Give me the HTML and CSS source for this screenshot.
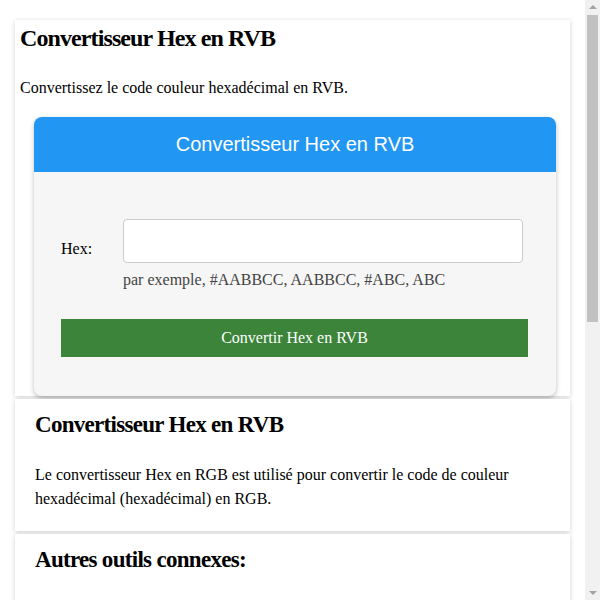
FILE: index.html
```html
<!DOCTYPE html>
<html lang="fr">
<head>
  <meta charset="utf-8">
  <meta name="viewport" content="width=device-width, initial-scale=1">
  <title>Convertisseur Hex en RVB</title>
  <link rel="stylesheet" href="styles.css">
</head>
<body>
  <div class="page">
    <!-- Outil principal -->
    <section class="card card-tool">
      <h1 class="page-title">Convertisseur Hex en RVB</h1>
      <p class="page-intro">Convertissez le code couleur hexadécimal en RVB.</p>

      <div class="converter">
        <div class="converter-header">Convertisseur Hex en RVB</div>
        <form class="converter-body" onsubmit="return false;">
          <div class="field-row">
            <label class="field-label" for="hex">Hex:</label>
            <div class="field-input">
              <input type="text" id="hex" class="hex-input">
              <div class="field-hint">par exemple, #AABBCC, AABBCC, #ABC, ABC</div>
            </div>
          </div>
          <button type="submit" class="convert-btn">Convertir Hex en RVB</button>
        </form>
      </div>
    </section>

    <!-- Description -->
    <section class="card card-text">
      <h2 class="section-title">Convertisseur Hex en RVB</h2>
      <p class="section-text">Le convertisseur Hex en RGB est utilisé pour convertir le code de couleur hexadécimal (hexadécimal) en RGB.</p>
    </section>

    <!-- Outils connexes -->
    <section class="card card-text">
      <h2 class="section-title">Autres outils connexes:</h2>
      <ul class="tool-list">
        <li>Convertisseur RVB en Hex</li>
        <li>Convertisseur Hex en HSL</li>
        <li>Convertisseur Hex en CMJN</li>
      </ul>
    </section>
  </div>

  <!-- Barre de défilement -->
  <div class="scrollbar" aria-hidden="true">
    <span class="scroll-arrow scroll-up"></span>
    <span class="scroll-thumb"></span>
    <span class="scroll-arrow scroll-down"></span>
  </div>
</body>
</html>
```

FILE: styles.css
```css
/* Reset */
* {
  box-sizing: border-box;
}

body {
  margin: 0;
  background: #fff;
  color: #000;
  font-family: "Liberation Serif", "Times New Roman", serif;
  font-size: 16px;
}

.page {
  width: 585px;
  padding: 20px 15px 20px;
  display: flex;
  flex-direction: column;
  gap: 3px;
}

/* Cartes */
.card {
  background: #fff;
  box-shadow: 0 1px 5px rgba(0, 0, 0, 0.18);
}

.card-tool {
  padding: 5px 5px 0;
}

.page-title {
  margin: 0;
  font-size: 24px;
  font-weight: bold;
  letter-spacing: -0.9px;
}

.page-intro {
  margin: 27px 0 20px;
}

/* Widget convertisseur */
.converter {
  width: 522px;
  margin-left: 14px;
  border-radius: 8px;
  overflow: hidden;
  background: #f6f6f6;
  box-shadow: 0 2px 5px rgba(0, 0, 0, 0.25);
}

.converter-header {
  height: 55px;
  display: flex;
  align-items: center;
  justify-content: center;
  background: #2196f3;
  color: #fff;
  font-family: "Liberation Sans", Arial, sans-serif;
  font-size: 20px;
}

.converter-body {
  margin: 0;
  padding: 47px 28px 39px 27px;
}

.field-row {
  display: flex;
}

.field-label {
  width: 62px;
  padding-top: 21px;
}

.field-input {
  width: 400px;
}

.hex-input {
  display: block;
  width: 400px;
  height: 44px;
  border: 1px solid #ccc;
  border-radius: 4px;
  background: #fff;
  padding: 0 10px;
  font-family: inherit;
  font-size: 16px;
}

.field-hint {
  margin-top: 8px;
  color: #444;
}

.convert-btn {
  display: block;
  width: 100%;
  height: 38px;
  margin-top: 30px;
  border: 0;
  background: #3b843a;
  color: #fff;
  font-family: "Liberation Serif", "Times New Roman", serif;
  font-size: 16px;
}

/* Texte */
.card-text {
  padding: 13px 20px 20px;
}

.section-title {
  margin: 0;
  font-size: 23px;
  font-weight: bold;
  letter-spacing: -0.7px;
}

.section-text {
  margin: 25px 0 0;
  line-height: 24px;
}

.tool-list {
  margin: 30px 0 0;
  line-height: 24px;
}

/* Barre de défilement (fenêtre) */
.scrollbar {
  position: fixed;
  top: 0;
  right: 0;
  bottom: 0;
  width: 15px;
  background: #f1f1f1;
  display: flex;
  flex-direction: column;
  align-items: center;
}

.scroll-arrow {
  width: 0;
  height: 0;
  margin: 5px 0;
  border-left: 4px solid transparent;
  border-right: 4px solid transparent;
}

.scroll-up {
  border-bottom: 4px solid #a3a3a3;
}

.scroll-down {
  margin-top: auto;
  border-top: 4px solid #a3a3a3;
}

.scroll-thumb {
  width: 11px;
  height: 307px;
  margin-top: 1px;
  background: #c1c1c1;
}
```
